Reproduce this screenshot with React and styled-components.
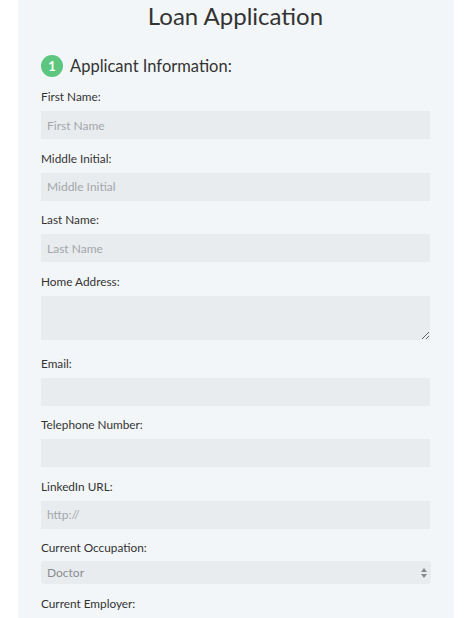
import styled, { createGlobalStyle } from 'styled-components'

const Global = createGlobalStyle`
  html, body { margin: 0; padding: 0; background: #fff; }
  body { font-family: Lato, "Open Sans", sans-serif; color: #333; }
  * { box-sizing: border-box; }
`;

const Panel = styled.div`
  margin-left: 18px;
  width: 436px;
  min-height: 618px;
  background: #f3f6f8;
  padding: 0 24px 0 23px;
`;

const Title = styled.h1`
  margin: 0;
  font-size: 24px;
  line-height: 31px;
  font-weight: 400;
  text-align: center;
  color: #333;
`;

const Section = styled.h2`
  display: flex;
  align-items: center;
  gap: 7px;
  margin: 24px 0 11px;
  height: 22px;
  font-size: 16.5px;
  font-weight: 400;
  color: #333;
`;

const Step = styled.span`
  width: 22px;
  height: 22px;
  border-radius: 50%;
  background: #5cc67e;
  color: #fff;
  font-size: 13px;
  font-weight: 700;
  display: flex;
  align-items: center;
  justify-content: center;
`;

const Field = styled.div`
  margin-bottom: ${p => p.$gap || 10.5}px;
`;

const Label = styled.label`
  display: block;
  font-size: 11.8px;
  line-height: 18px;
  margin-bottom: ${p => p.$tight ? 4 : 5}px;
  color: #333;
`;

const Input = styled.input`
  display: block;
  width: 389px;
  height: 28px;
  border: none;
  background: #e8ecef;
  padding: 0 6px;
  font-family: inherit;
  font-size: 12px;
  color: #333;
  outline: none;
  &::placeholder { color: #a3a7ab; }
`;

const Area = styled.textarea`
  display: block;
  width: 389px;
  height: 44px;
  border: none;
  background: #e8ecef;
  padding: 6px;
  font-family: inherit;
  outline: none;
`;

const SelectWrap = styled.div`
  position: relative;
  width: 390px;
`;

const Select = styled.select`
  display: block;
  width: 100%;
  height: 23px;
  border: none;
  border-radius: 4px;
  background: #e8ecef;
  padding: 0 6px;
  font-family: inherit;
  font-size: 12px;
  color: #8a8e92;
  appearance: none;
  outline: none;
`;

const Arrows = styled.svg`
  position: absolute;
  right: 3px;
  top: 6px;
  pointer-events: none;
`;

const fields = [
  { label: 'First Name:', ph: 'First Name' },
  { label: 'Middle Initial:', ph: 'Middle Initial' },
  { label: 'Last Name:', ph: 'Last Name' },
];

export default function App() {
  return (
    <>
      <Global />
      <Panel>
        <Title>Loan Application</Title>
        <Section><Step>1</Step>Applicant Information:</Section>
        {fields.map(f => (
          <Field key={f.label}>
            <Label>{f.label}</Label>
            <Input placeholder={f.ph} />
          </Field>
        ))}
        <Field $gap={15}>
          <Label>Home Address:</Label>
          <Area />
        </Field>
        <Field>
          <Label>Email:</Label>
          <Input type="email" />
        </Field>
        <Field>
          <Label>Telephone Number:</Label>
          <Input type="tel" />
        </Field>
        <Field>
          <Label>LinkedIn URL:</Label>
          <Input placeholder="http://" />
        </Field>
        <Field $gap={11}>
          <Label $tight>Current Occupation:</Label>
          <SelectWrap>
            <Select defaultValue="Doctor">
              <option>Doctor</option>
              <option>Engineer</option>
              <option>Teacher</option>
            </Select>
            <Arrows width="8" height="12" viewBox="0 0 8 12">
              <path d="M4 1 L7 5 H1 Z M4 11 L7 7 H1 Z" fill="#888" />
            </Arrows>
          </SelectWrap>
        </Field>
        <Field>
          <Label>Current Employer:</Label>
        </Field>
      </Panel>
    </>
  );
}
